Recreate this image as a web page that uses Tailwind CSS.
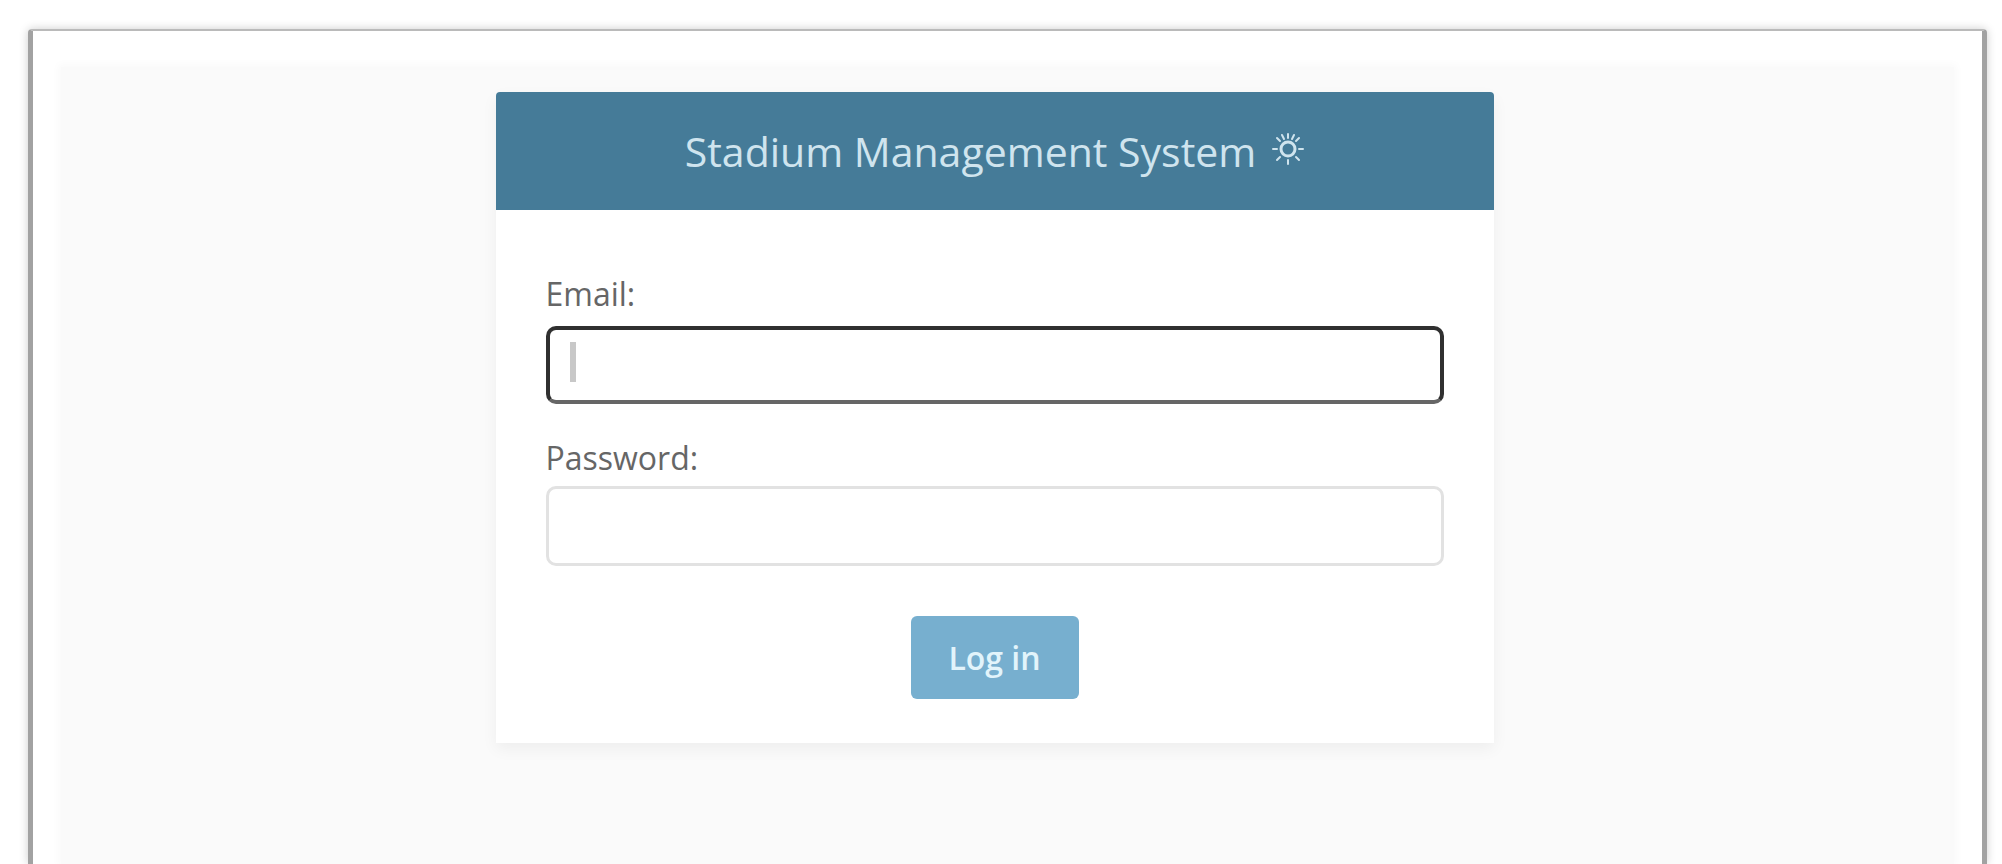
<!DOCTYPE html>
<html lang="en">
<head>
<meta charset="utf-8">
<meta name="viewport" content="width=device-width, initial-scale=1">
<title>Stadium Management System</title>
<script src="https://cdn.jsdelivr.net/npm/@tailwindcss/browser@4"></script>
</head>
<body class="flex min-h-screen flex-col bg-white pt-[29px] pr-[15px] pl-7 font-['Open_Sans','Noto_Sans',sans-serif] text-[#666666]">
<div class="flex grow flex-col rounded-t-sm border-x-[5px] border-t-2 border-x-[#a2a2a2] border-t-[#bababa] bg-white px-7 pt-9 shadow-[0_0_10px_rgba(0,0,0,0.2)]">
  <main class="grow bg-[#fafafa] pt-[25px] pr-[26px] pb-10 shadow-[0_0_8px_3px_#fafafa]">
    <section class="mx-auto max-w-[998px] rounded-t-sm bg-white shadow-[0_6px_16px_rgba(0,0,0,0.05)]">
      <header class="flex h-[118px] items-center justify-center gap-4 rounded-t-sm bg-[#457b98] text-[#cfe4ee]">
        <h1 class="text-[41px] leading-[56px] font-normal">Stadium Management System</h1>
        <svg class="mb-1 size-8" viewBox="0 0 32 32" fill="none" stroke="currentColor" stroke-width="2" stroke-linecap="round" aria-hidden="true">
          <circle cx="16" cy="16" r="7" stroke-width="3"/>
          <path d="M16 1v4M16 27v4M1 16h4M27 16h4M5 5l3 3M24 24l3 3M27 5l-3 3M8 24l-3 3M10 2l2 4M22 2l-2 4"/>
        </svg>
      </header>
      <form class="flex flex-col px-[50px] pt-16 pb-11">
        <label for="email" class="mb-3 text-[32px] leading-10">Email:</label>
        <div class="relative">
          <input id="email" type="email" class="block h-[78px] w-full rounded-[10px] border-4 border-[#303030] border-b-[#666666] bg-white px-5 text-[32px] caret-transparent outline-none">
          <span class="absolute top-4 left-6 h-10 w-1.5 bg-[#c8c8c8]"></span>
        </div>
        <label for="password" class="mt-[34px] mb-2 text-[32px] leading-10">Password:</label>
        <input id="password" type="password" class="block h-20 w-full rounded-[10px] border-[3px] border-[#e2e2e2] bg-white px-5 text-[32px] outline-none">
        <button type="submit" class="mt-[50px] h-[83px] w-[168px] self-center rounded-md bg-[#77afcf] text-[32px] font-semibold text-[#e2f4fb]">Log in</button>
      </form>
    </section>
  </main>
</div>
</body>
</html>
